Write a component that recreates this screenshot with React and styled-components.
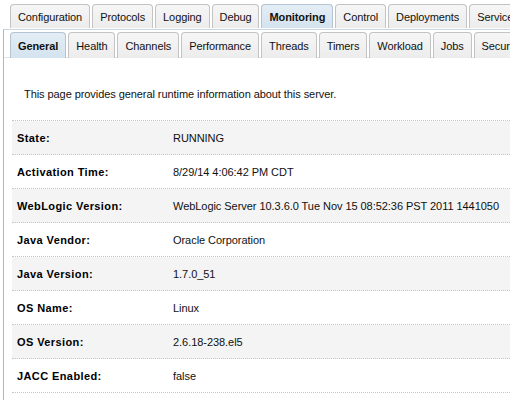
import React from 'react'
import styled, { createGlobalStyle } from 'styled-components'

const topTabs = ['Configuration', 'Protocols', 'Logging', 'Debug', 'Monitoring', 'Control', 'Deployments', 'Services']
const subTabs = ['General', 'Health', 'Channels', 'Performance', 'Threads', 'Timers', 'Workload', 'Jobs', 'Security']

const rows = [
  ['State:', 'RUNNING'],
  ['Activation Time:', '8/29/14 4:06:42 PM CDT'],
  ['WebLogic Version:', 'WebLogic Server 10.3.6.0 Tue Nov 15 08:52:36 PST 2011 1441050'],
  ['Java Vendor:', 'Oracle Corporation'],
  ['Java Version:', '1.7.0_51'],
  ['OS Name:', 'Linux'],
  ['OS Version:', '2.6.18-238.el5'],
  ['JACC Enabled:', 'false'],
]

const App = () => (
  <>
    <GlobalStyle />
    <Page>
      <TabBar>
        {topTabs.map((t) => (
          <Tab key={t} $active={t === 'Monitoring'}>{t}</Tab>
        ))}
      </TabBar>
      <Panel>
        <SubTabBar>
          {subTabs.map((t) => (
            <Tab key={t} $active={t === 'General'} $sub>{t}</Tab>
          ))}
        </SubTabBar>
        <Intro>This page provides general runtime information about this server.</Intro>
        <Table>
          {rows.map(([label, value], i) => (
            <Row key={label} $shaded={i % 2 === 0}>
              <Label>{label}</Label>
              <Value>{value}</Value>
            </Row>
          ))}
        </Table>
      </Panel>
    </Page>
  </>
)

const GlobalStyle = createGlobalStyle`
  html, body {
    margin: 0;
    background: #fff;
    overflow: hidden;
  }
  body {
    font-family: Tahoma, "Liberation Sans", Arial, sans-serif;
    font-size: 11px;
    color: #000;
  }
`

const Page = styled.div`
  width: 510px;
  height: 400px;
  padding-top: 4px;
  box-sizing: border-box;
  overflow: hidden;
`

const TabBar = styled.div`
  display: flex;
  gap: 2px;
  padding-left: 10px;
  height: 25px;
  white-space: nowrap;
`

const Tab = styled.div`
  flex: none;
  display: flex;
  align-items: center;
  padding: 0 7px;
  height: ${(p) => (p.$sub ? '26px' : '24px')};
  box-sizing: border-box;
  border: 1px solid ${(p) => (p.$active ? '#b4c4d3' : '#c3c3c3')};
  border-bottom: none;
  border-radius: 4px 4px 0 0;
  background: ${(p) => (p.$active ? 'linear-gradient(#e3edf5, #d4e3ef)' : 'linear-gradient(#f6f6f6, #ececec)')};
  font-weight: ${(p) => (p.$active ? 'bold' : 'normal')};
  color: #111;
  letter-spacing: -0.1px;
`

const Panel = styled.div`
  margin-left: 3px;
  border-left: 1px solid #b5b5b5;
  border-top: 1px solid #c9d5e0;
  height: 380px;
`

const SubTabBar = styled.div`
  display: flex;
  gap: 2px;
  padding: 2px 0 0 6px;
  height: 28px;
  box-sizing: border-box;
  border-bottom: 1px solid #dde3e8;
  white-space: nowrap;
`

const Intro = styled.p`
  margin: 0;
  padding: 30px 0 0 20px;
  height: 62px;
  box-sizing: border-box;
  color: #111;
  letter-spacing: -0.07px;
`

const Table = styled.div`
  margin-left: 8px;
  border-top: 1px dotted #c6c6c6;
`

const Row = styled.div`
  display: grid;
  grid-template-columns: 161px 1fr;
  align-items: center;
  height: 34px;
  box-sizing: border-box;
  border-bottom: 1px dotted #c6c6c6;
  background: ${(p) => (p.$shaded ? '#f4f4f4' : '#fff')};
  white-space: nowrap;
`

const Label = styled.div`
  padding-left: 5px;
  font-weight: bold;
  color: #000;
  letter-spacing: 0.4px;
`

const Value = styled.div`
  color: #111;
  letter-spacing: -0.05px;
`

export default App
